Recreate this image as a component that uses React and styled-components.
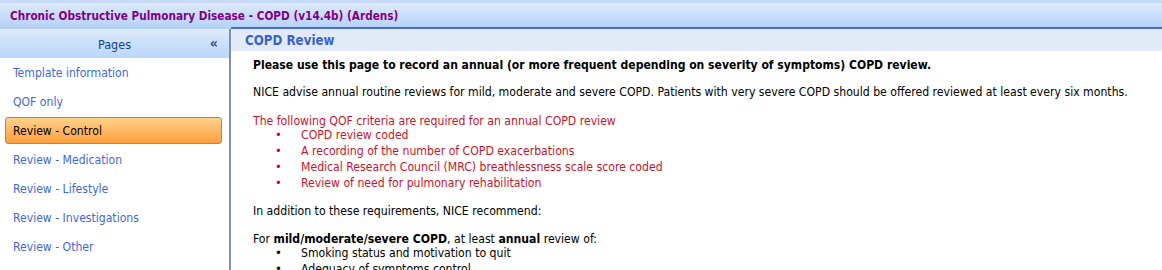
import React from "react";
import styled, { createGlobalStyle } from "styled-components";

const Global = createGlobalStyle`
  html, body { margin: 0; padding: 0; background: #fff; }
  body { font-family: "DejaVu Sans Condensed", "DejaVu Sans", Tahoma, sans-serif; font-size: 12px; }
`;

const Window = styled.div`
  width: 1162px;
  height: 270px;
  display: flex;
  flex-direction: column;
  overflow: hidden;
  background: #fff;
`;

const TitleBar = styled.div`
  height: 29px;
  flex: none;
  display: flex;
  align-items: center;
  padding-left: 10px;
  box-sizing: border-box;
  border-top: 3px solid #c9dcf7;
  background: linear-gradient(#dde9fc, #b3d0f8);
  color: #820082;
  font-weight: bold;
  font-size: 11.7px;
`;

const Body = styled.div`
  flex: 1;
  display: flex;
  min-height: 0;
`;

const Sidebar = styled.div`
  width: 229px;
  flex: none;
  display: flex;
  flex-direction: column;
  border-right: 2px solid #7c90b3;
`;

const SideHeader = styled.div`
  height: 29px;
  display: flex;
  align-items: center;
  justify-content: center;
  position: relative;
  box-sizing: border-box;
  border-top: 1px solid #e6effc;
  background: linear-gradient(#dce9fc, #bad6f9);
  color: #15428b;
  font-size: 12.5px;
`;

const Collapse = styled.span`
  position: absolute;
  right: 11px;
  top: 5px;
  font-size: 14px;
  font-weight: bold;
  color: #2b4d8f;
`;

const Menu = styled.div`
  display: flex;
  flex-direction: column;
`;

const Item = styled.div`
  height: 27px;
  margin: 1px 7px 1px 5px;
  padding-left: 7px;
  display: flex;
  align-items: center;
  box-sizing: border-box;
  font-size: 12.1px;
  border-radius: 3px;
  color: ${(p) => (p.$active ? "#000" : "#3f67d9")};
  border: 1px solid ${(p) => (p.$active ? "#8e8e8e" : "transparent")};
  background: ${(p) =>
    p.$active ? "linear-gradient(#ffd28a, #ff9f3e)" : "transparent"};
`;

const Panel = styled.div`
  flex: 1;
  display: flex;
  flex-direction: column;
  border-top: 2px solid #4a6fc1;
  margin-top: -2px;
  min-width: 0;
`;

const PanelHeader = styled.div`
  height: 22px;
  flex: none;
  display: flex;
  align-items: center;
  padding-left: 14px;
  background: #e3eaf7;
  color: #3a62cc;
  font-weight: bold;
  font-size: 13.2px;
`;

const Content = styled.div`
  padding: 7px 0 0 22px;
  color: #000;
  font-size: 12.15px;
`;

const P = styled.p`
  margin: ${(p) => p.$mt ?? 13}px 0 0;
  line-height: 14px;
  white-space: nowrap;
  font-weight: ${(p) => (p.$bold ? "bold" : "normal")};
  font-size: ${(p) => (p.$bold ? "12.05px" : "inherit")};
  color: ${(p) => (p.$red ? "#c8142c" : "inherit")};
`;

const List = styled.ul`
  list-style: none;
  margin: -1px 0 0;
  padding: 0 0 0 22px;
  color: ${(p) => (p.$red ? "#c8142c" : "inherit")};
`;

const Li = styled.li`
  line-height: 16px;
  display: flex;
  white-space: nowrap;
  &::before {
    content: "•";
    width: 26px;
    flex: none;
    font-size: 13px;
  }
`;

const items = [
  "Template information",
  "QOF only",
  "Review - Control",
  "Review - Medication",
  "Review - Lifestyle",
  "Review - Investigations",
  "Review - Other",
];

export default function App() {
  return (
    <Window>
      <Global />
      <TitleBar>Chronic Obstructive Pulmonary Disease - COPD (v14.4b) (Ardens)</TitleBar>
      <Body>
        <Sidebar>
          <SideHeader>
            Pages
            <Collapse>«</Collapse>
          </SideHeader>
          <Menu>
            {items.map((t, i) => (
              <Item key={t} $active={i === 2}>
                {t}
              </Item>
            ))}
          </Menu>
        </Sidebar>
        <Panel>
          <PanelHeader>COPD Review</PanelHeader>
          <Content>
            <P $bold $mt={0}>
              Please use this page to record an annual (or more frequent depending on severity of symptoms) COPD review.
            </P>
            <P>
              NICE advise annual routine reviews for mild, moderate and severe COPD. Patients with very severe COPD should be offered reviewed at least every six months.
            </P>
            <P $red $mt={15}>The following QOF criteria are required for an annual COPD review</P>
            <List $red>
              <Li>COPD review coded</Li>
              <Li>A recording of the number of COPD exacerbations</Li>
              <Li>Medical Research Council (MRC) breathlessness scale score coded</Li>
              <Li>Review of need for pulmonary rehabilitation</Li>
            </List>
            <P $mt={13}>In addition to these requirements, NICE recommend:</P>
            <P $mt={14}>
              For <b>mild/moderate/severe COPD</b>, at least <b>annual</b> review of:
            </P>
            <List>
              <Li>Smoking status and motivation to quit</Li>
              <Li>Adequacy of symptoms control</Li>
            </List>
          </Content>
        </Panel>
      </Body>
    </Window>
  );
}
